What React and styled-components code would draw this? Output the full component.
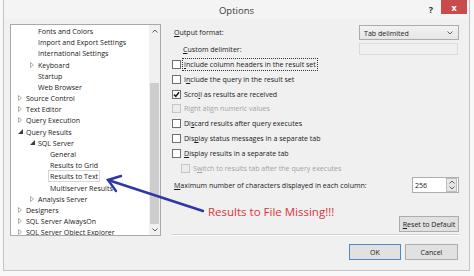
import styled, { createGlobalStyle } from "styled-components";

const GlobalStyle = createGlobalStyle`
  body {
    margin: 0;
    background: #f8f8f8;
    font-family: "Open Sans", "DejaVu Sans", sans-serif;
  }
`;

const tree = [
  { label: "Fonts and Colors", level: 1 },
  { label: "Import and Export Settings", level: 1 },
  { label: "International Settings", level: 1 },
  { label: "Keyboard", level: 1, state: "closed" },
  { label: "Startup", level: 1 },
  { label: "Web Browser", level: 1 },
  { label: "Source Control", level: 0, state: "closed" },
  { label: "Text Editor", level: 0, state: "closed" },
  { label: "Query Execution", level: 0, state: "closed" },
  { label: "Query Results", level: 0, state: "open" },
  { label: "SQL Server", level: 1, state: "open" },
  { label: "General", level: 2 },
  { label: "Results to Grid", level: 2 },
  { label: "Results to Text", level: 2, selected: true },
  { label: "Multiserver Results", level: 2 },
  { label: "Analysis Server", level: 1, state: "closed" },
  { label: "Designers", level: 0, state: "closed" },
  { label: "SQL Server AlwaysOn", level: 0, state: "closed" },
  { label: "SQL Server Object Explorer", level: 0, state: "closed" },
];

const options = [
  { pre: "", key: "I", post: "nclude column headers in the result set", focused: true },
  { pre: "I", key: "n", post: "clude the query in the result set" },
  { pre: "Scro", key: "l", post: "l as results are received", checked: true },
  { pre: "Right align numeric values", key: "", post: "", disabled: true },
  { pre: "Di", key: "s", post: "card results after query executes" },
  { pre: "Dis", key: "p", post: "lay status messages in a separate tab" },
  { pre: "", key: "D", post: "isplay results in a separate tab" },
  { pre: "S", key: "w", post: "itch to results tab after the query executes", disabled: true, sub: true },
];

const Expander = ({ state }) => {
  if (state === "open")
    return (
      <svg width="5" height="5" viewBox="0 0 5 5">
        <path d="M5 0 L5 5 L0 5 Z" fill="#3c3c3c" />
      </svg>
    );
  if (state === "closed")
    return (
      <svg width="4" height="6" viewBox="0 0 4 6">
        <path d="M0.5 0.5 L3.5 3 L0.5 5.5 Z" fill="none" stroke="#9a9a9a" strokeWidth="0.8" />
      </svg>
    );
  return null;
};

const Chevron = ({ up }) => (
  <svg width="6" height="4" viewBox="0 0 6 4">
    <path d={up ? "M0.5 3.5 L3 1 L5.5 3.5" : "M0.5 0.5 L3 3 L5.5 0.5"} fill="none" stroke="#606060" strokeWidth="1" />
  </svg>
);

const Check = () => (
  <svg width="7" height="7" viewBox="0 0 7 7">
    <path d="M1 3.6 L2.8 5.4 L6 1.2" fill="none" stroke="#1a1a1a" strokeWidth="1.5" />
  </svg>
);

const App = () => {
  return (
    <>
      <GlobalStyle />
      <Window>
        <TitleBar>
          <Title>Options</Title>
          <Help>?</Help>
          <Close>x</Close>
        </TitleBar>

        <Content>
          <TreePanel>
            <TreeList>
              {tree.map((item) => (
                <TreeRow key={item.label} $level={item.level}>
                  <ExpanderCell>
                    <Expander state={item.state} />
                  </ExpanderCell>
                  <TreeLabel $selected={item.selected}>{item.label}</TreeLabel>
                </TreeRow>
              ))}
            </TreeList>
            <ScrollBar>
              <ScrollButton>
                <Chevron up />
              </ScrollButton>
              <ScrollTrack>
                <Thumb />
              </ScrollTrack>
              <ScrollButton>
                <Chevron />
              </ScrollButton>
            </ScrollBar>
          </TreePanel>

          <Settings>
            <FieldRow $h={17}>
              <Label>
                <U>O</U>utput format:
              </Label>
              <Select>
                Tab delimited
                <Chevron />
              </Select>
            </FieldRow>
            <FieldRow $h={16}>
              <Label $indent>
                <U>C</U>ustom delimiter:
              </Label>
              <TextBox />
            </FieldRow>

            {options.map((o) => (
              <CheckRow key={o.pre + o.post} $sub={o.sub} $disabled={o.disabled}>
                <Box $disabled={o.disabled}>{o.checked && <Check />}</Box>
                <CheckText $focused={o.focused}>
                  {o.pre}
                  {o.key && <U>{o.key}</U>}
                  {o.post}
                </CheckText>
              </CheckRow>
            ))}

            <FieldRow $h={18}>
              <Label>
                <U>M</U>aximum number of characters displayed in each column:
              </Label>
              <Spin>
                256
                <SpinButtons>
                  <Chevron up />
                  <Chevron />
                </SpinButtons>
              </Spin>
            </FieldRow>

            <ResetRow>
              <Button $w={60}>
                <U>R</U>eset to Default
              </Button>
            </ResetRow>
            <Separator />
          </Settings>
        </Content>

        <Footer>
          <Button $w={52} $default>
            OK
          </Button>
          <Button $w={53}>Cancel</Button>
        </Footer>

        <Annotation>
          <svg width="474" height="276" viewBox="0 0 474 276">
            <g stroke="#2f36a8" strokeWidth="2.4" strokeLinecap="round" fill="none">
              <path d="M202 211 L107 180" />
              <path d="M120 176 L107 180 L115 191" />
            </g>
          </svg>
          <Missing>Results to File Missing!!!</Missing>
        </Annotation>
      </Window>
    </>
  );
};

const Window = styled.div`
  position: relative;
  box-sizing: border-box;
  width: 467px;
  height: 271px;
  margin-left: 3px;
  background: #f0f0f0;
  border: 1px solid #c4c4c4;
  border-top: none;
  display: flex;
  flex-direction: column;
  color: #1a1a1a;
  font-size: 7.05px;
`;

const TitleBar = styled.div`
  height: 19px;
  flex-shrink: 0;
  display: flex;
  align-items: flex-start;
  justify-content: flex-end;
  position: relative;
  background: #f4f4f4;
`;

const Title = styled.div`
  position: absolute;
  left: 0;
  right: 0;
  top: 4px;
  text-align: center;
  font-size: 9.5px;
  color: #3a3a3a;
`;

const Help = styled.div`
  font-size: 9px;
  font-weight: bold;
  color: #333;
  margin-top: 3px;
  margin-right: 8px;
`;

const Close = styled.div`
  width: 26px;
  height: 14px;
  margin-right: 2px;
  background: #c94c4c;
  color: #fff;
  font-size: 9px;
  font-weight: bold;
  display: flex;
  align-items: center;
  justify-content: center;
`;

const Content = styled.div`
  display: flex;
  padding: 5px 0 0 6px;
  height: 212px;
`;

const TreePanel = styled.div`
  box-sizing: border-box;
  width: 151px;
  height: 212px;
  background: #fff;
  border: 1px solid #a9a9a9;
  display: flex;
  overflow: hidden;
`;

const TreeList = styled.div`
  flex: 1;
  padding-top: 0.4px;
  overflow: hidden;
`;

const TreeRow = styled.div`
  height: 11.2px;
  display: flex;
  align-items: center;
  padding-left: ${(p) => 7 + p.$level * 12}px;
  white-space: nowrap;
`;

const ExpanderCell = styled.span`
  width: 8px;
  display: flex;
  align-items: center;
`;

const TreeLabel = styled.span`
  padding: 0 1px;
  line-height: 10px;
  border: 1px solid ${(p) => (p.$selected ? "#d6d6d6" : "transparent")};
  margin-left: -2px;
`;

const ScrollBar = styled.div`
  width: 11px;
  background: #f0f0f0;
  display: flex;
  flex-direction: column;
`;

const ScrollButton = styled.div`
  height: 13px;
  display: flex;
  align-items: center;
  justify-content: center;
`;

const ScrollTrack = styled.div`
  flex: 1;
  padding: 47px 1px 0 1px;
`;

const Thumb = styled.div`
  height: 141px;
  background: #cdcdcd;
`;

const Settings = styled.div`
  width: 287px;
  margin-left: 11px;
  display: flex;
  flex-direction: column;
`;

const FieldRow = styled.div`
  height: ${(p) => p.$h}px;
  display: flex;
  align-items: center;
  justify-content: space-between;
  white-space: nowrap;
`;

const Label = styled.span`
  padding-left: ${(p) => (p.$indent ? 11 : 2)}px;
`;

const U = styled.span`
  text-decoration: underline;
  text-underline-offset: 1px;
`;

const Select = styled.div`
  box-sizing: border-box;
  width: 100px;
  height: 15px;
  margin-top: 1px;
  padding: 0 5px 0 4px;
  display: flex;
  align-items: center;
  justify-content: space-between;
  border: 1px solid #acacac;
  background: linear-gradient(#f2f2f2, #e6e6e6);
`;

const TextBox = styled.div`
  box-sizing: border-box;
  width: 99px;
  height: 12px;
  margin-right: 1px;
  border: 1px solid #dadada;
  background: #f0f0f0;
`;

const CheckRow = styled.div`
  height: 15px;
  display: flex;
  align-items: center;
  white-space: nowrap;
  padding-left: ${(p) => (p.$sub ? 9 : 0)}px;
  color: ${(p) => (p.$disabled ? "#a3a3a3" : "inherit")};
`;

const Box = styled.span`
  box-sizing: border-box;
  width: 9px;
  height: 9px;
  margin-right: 1px;
  border: 1px solid ${(p) => (p.$disabled ? "#c6c6c6" : "#6f6f6f")};
  background: ${(p) => (p.$disabled ? "#ececec" : "#fff")};
  display: flex;
  align-items: center;
  justify-content: center;
`;

const CheckText = styled.span`
  padding: 1px 1px;
  line-height: 9px;
  border: 1px dotted ${(p) => (p.$focused ? "#333" : "transparent")};
`;

const Spin = styled.div`
  box-sizing: border-box;
  width: 47px;
  height: 16px;
  padding-left: 2px;
  border: 1px solid #abadb3;
  background: #fff;
  display: flex;
  align-items: center;
  justify-content: space-between;
`;

const SpinButtons = styled.div`
  width: 9px;
  height: 12px;
  margin-right: 1px;
  background: #e6e6e6;
  border: 1px solid #bdbdbd;
  display: flex;
  flex-direction: column;
  align-items: center;
  justify-content: space-around;
`;

const ResetRow = styled.div`
  margin-top: 22px;
  height: 16px;
  display: flex;
  justify-content: flex-end;
`;

const Button = styled.div`
  box-sizing: border-box;
  width: ${(p) => p.$w}px;
  height: 16px;
  display: flex;
  align-items: center;
  justify-content: center;
  background: #e1e1e1;
  border: 1px solid ${(p) => (p.$default ? "#4a8ac6" : "#adadad")};
  white-space: nowrap;
`;

const Separator = styled.div`
  margin-top: 2px;
  height: 1px;
  background: #d2d2d2;
  border-bottom: 1px solid #fff;
`;

const Footer = styled.div`
  display: flex;
  justify-content: flex-end;
  gap: 4px;
  padding: 8px 11px 0 0;
`;

const Annotation = styled.div`
  position: absolute;
  left: -3px;
  top: 0;
  width: 474px;
  height: 276px;
  pointer-events: none;
`;

const Missing = styled.div`
  position: absolute;
  left: 207px;
  top: 204px;
  font-family: "Open Sans", sans-serif;
  font-size: 11.5px;
  color: #dc3340;
  white-space: nowrap;
`;

export default App;
